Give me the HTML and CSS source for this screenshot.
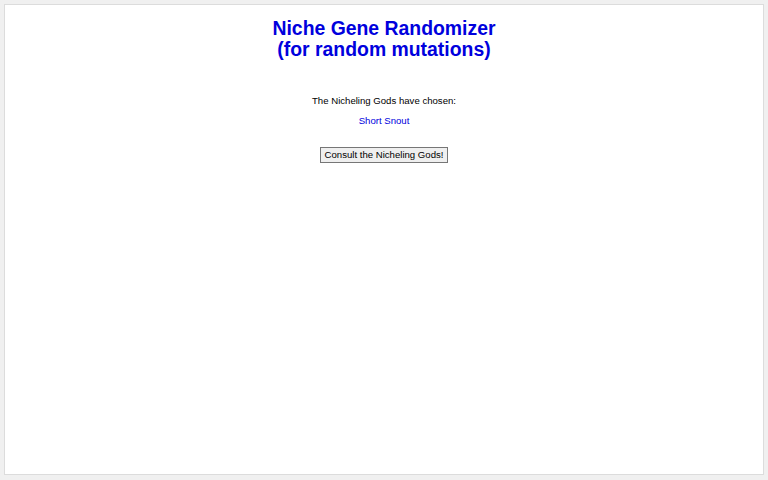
FILE: index.html
```html
<!DOCTYPE html>
<html>
<head>
<meta charset="utf-8">
<title>Niche Gene Randomizer</title>
<link rel="stylesheet" href="styles.css">
</head>
<body>
<div class="page">
  <h1 class="title">Niche Gene Randomizer<br>(for random mutations)</h1>
  <p class="intro">The Nicheling Gods have chosen:</p>
  <p class="result">Short Snout</p>
  <button class="consult" type="button">Consult the Nicheling Gods!</button>
</div>
</body>
</html>
```

FILE: styles.css
```css
html, body {
  margin: 0;
  height: 100%;
}

body {
  background: #f0f0f0;
  padding: 4px 4px 5px 4px;
  box-sizing: border-box;
  font-family: "Liberation Sans", Arial, sans-serif;
}

.page {
  background: #ffffff;
  border: 1px solid #dcdcdc;
  height: 100%;
  box-sizing: border-box;
  display: flex;
  flex-direction: column;
  align-items: center;
}

.title {
  margin: 13px 0 0 0;
  font-size: 19.4px;
  line-height: 21px;
  font-weight: bold;
  color: #0000dd;
  text-align: center;
}

.intro {
  margin: 35px 0 0 0;
  font-size: 9.6px;
  line-height: 12px;
  color: #000000;
}

.result {
  margin: 8px 0 0 0;
  font-size: 9.6px;
  line-height: 12px;
  color: #0000dd;
}

.consult {
  margin-top: 20px;
  font-family: "Liberation Sans", Arial, sans-serif;
  font-size: 9.6px;
  line-height: 12px;
  padding: 1px 4px;
  color: #000;
  background: #efefef;
  border: 1px solid #767676;
  border-radius: 0;
}
```
